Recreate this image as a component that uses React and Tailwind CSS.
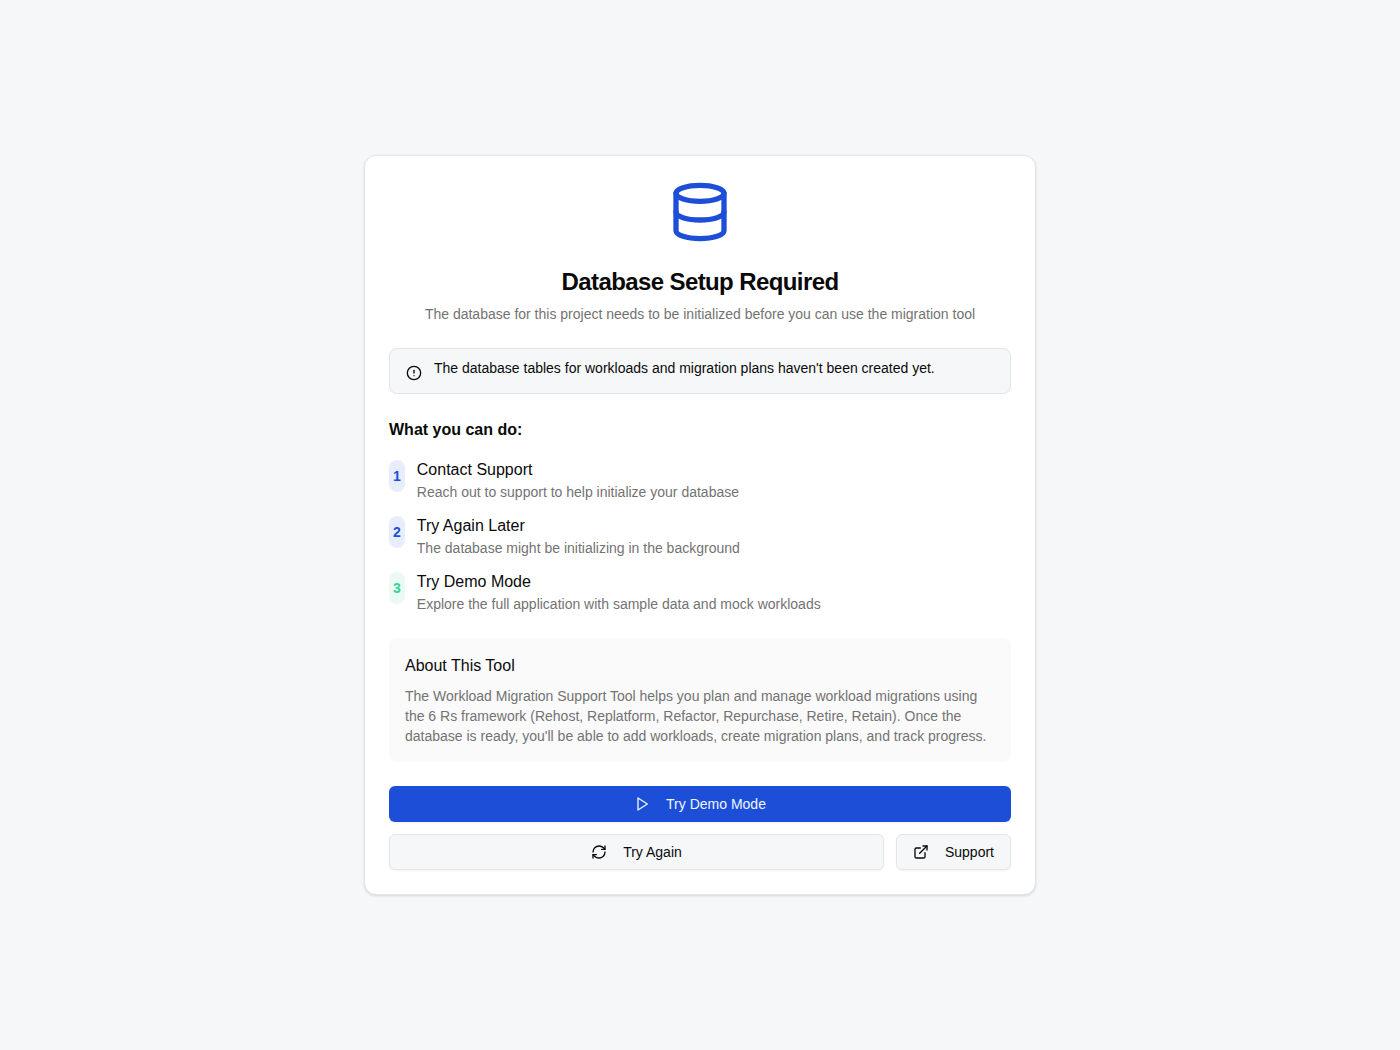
import React from 'react';
import { CircleAlert, Database, ExternalLink, RefreshCw } from 'lucide-react';

const steps = [
  {
    title: 'Contact Support',
    text: 'Reach out to support to help initialize your database',
    badge: 'bg-[#e8edfb] text-[#1d4ed8]',
  },
  {
    title: 'Try Again Later',
    text: 'The database might be initializing in the background',
    badge: 'bg-[#e8edfb] text-[#1d4ed8]',
  },
  {
    title: 'Try Demo Mode',
    text: 'Explore the full application with sample data and mock workloads',
    badge: 'bg-[#ebfaf4] text-[#34d399]',
  },
];

const outlineButton =
  'flex h-9 items-center justify-center gap-4 rounded-md border border-[#e2e5e9] bg-[#f5f7f9] px-4 text-sm shadow-xs hover:bg-gray-100';

function PlayIcon({ className }) {
  return (
    <svg
      className={className}
      viewBox="0 0 24 24"
      fill="none"
      stroke="currentColor"
      strokeWidth="2"
      strokeLinecap="round"
      strokeLinejoin="round"
      aria-hidden="true"
    >
      <polygon points="6 3 20 12 6 21 6 3" />
    </svg>
  );
}

function Step({ number, step }) {
  return (
    <li className="flex items-start gap-3">
      <span className={`mt-0.5 rounded-full px-1 py-1.5 text-sm font-bold ${step.badge}`}>{number}</span>
      <div>
        <h4 className="text-base">{step.title}</h4>
        <p className="text-sm text-[#737373]">{step.text}</p>
      </div>
    </li>
  );
}

function DatabaseSetup() {
  return (
    <div className="w-full max-w-2xl rounded-xl border border-[#e2e5e9] bg-white p-6 shadow-sm">
      <header className="text-center">
        <Database className="mx-auto mb-6 size-16 text-[#1d4ed8]" />
        <h1 className="text-2xl leading-7 font-bold tracking-tight">Database Setup Required</h1>
        <p className="mt-2 text-sm text-[#737373]">
          The database for this project needs to be initialized before you can use the migration tool
        </p>
      </header>

      <div role="alert" className="mt-6 flex items-start gap-3 rounded-lg border border-[#e2e5e9] bg-[#f5f7f9] px-4 pt-2 pb-3">
        <CircleAlert className="mt-2 size-4" />
        <p className="text-sm leading-[22px]">
          The database tables for workloads and migration plans haven't been created yet.
        </p>
      </div>

      <section className="mt-6">
        <h3 className="text-base font-bold">What you can do:</h3>
        <ol className="mt-4 space-y-3">
          {steps.map((step, index) => (
            <Step key={step.title} number={index + 1} step={step} />
          ))}
        </ol>
      </section>

      <section className="mt-6 rounded-lg bg-[#fafafa] p-4">
        <h4 className="text-base">About This Tool</h4>
        <p className="mt-2 text-sm text-[#737373]">
          The Workload Migration Support Tool helps you plan and manage workload migrations using the 6 Rs framework
          (Rehost, Replatform, Refactor, Repurchase, Retire, Retain). Once the database is ready, you'll be able to add
          workloads, create migration plans, and track progress.
        </p>
      </section>

      <div className="mt-6 space-y-3">
        <button
          type="button"
          className="flex h-9 w-full items-center justify-center gap-4 rounded-md bg-[#1d4ed8] px-4 text-sm text-blue-50 shadow-xs hover:bg-blue-800"
        >
          <PlayIcon className="size-4" />
          Try Demo Mode
        </button>
        <div className="flex gap-3">
          <button type="button" className={`${outlineButton} flex-1`}>
            <RefreshCw className="size-4" />
            Try Again
          </button>
          <button type="button" className={outlineButton}>
            <ExternalLink className="size-4" />
            Support
          </button>
        </div>
      </div>
    </div>
  );
}

export default function App() {
  return (
    <main className="flex min-h-screen items-center justify-center bg-[#f5f7f9] p-4 font-['Liberation_Sans',Arial,sans-serif] text-[#0a0a0a]">
      <DatabaseSetup />
    </main>
  );
}
